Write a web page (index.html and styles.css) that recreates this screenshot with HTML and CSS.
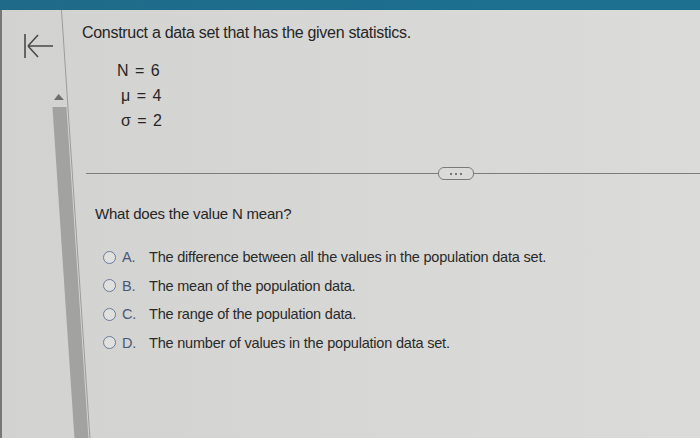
FILE: index.html
```html
<!DOCTYPE html>
<html>
<head>
<meta charset="utf-8">
<link rel="stylesheet" href="styles.css">
</head>
<body>
<div class="topbar"></div>
<div class="main">
  <aside class="side">
    <div class="iconcol">
      <svg class="back" width="30" height="26" viewBox="0 0 30 26">
        <path d="M2 1 V25 M5 13 H30 M5 13 L15 2 M5 13 L15 24" fill="none" stroke="#4a4a4a" stroke-width="1.6"/>
      </svg>
    </div>
    <div class="scrollcol">
      <div class="arrow"></div>
      <div class="thumb"></div>
    </div>
  </aside>
  <section class="content">
    <p class="title">Construct a data set that has the given statistics.</p>
    <div class="stats">
      <div class="stat n">N = 6</div>
      <div class="stat">μ = 4</div>
      <div class="stat">σ = 2</div>
    </div>
    <div class="sep">
      <div class="line left"></div>
      <div class="pill"><span></span><span></span><span></span></div>
      <div class="line"></div>
    </div>
    <p class="question">What does the value N mean?</p>
    <ul class="options">
      <li><span class="radio"></span><span class="letter">A.</span><span class="txt">The difference between all the values in the population data set.</span></li>
      <li><span class="radio"></span><span class="letter">B.</span><span class="txt">The mean of the population data.</span></li>
      <li><span class="radio"></span><span class="letter">C.</span><span class="txt">The range of the population data.</span></li>
      <li><span class="radio"></span><span class="letter">D.</span><span class="txt">The number of values in the population data set.</span></li>
    </ul>
  </section>
</div>
</body>
</html>
```
FILE: styles.css
```css
html, body {
  margin: 0;
  padding: 0;
}
body {
  width: 700px;
  height: 438px;
  overflow: hidden;
  background: linear-gradient(90deg, #d2d2d0 0%, #d7d7d5 50%, #dbdbd9 100%);
  font-family: "Liberation Sans", Arial, sans-serif;
  color: #262626;
}
.topbar {
  height: 10px;
  background: linear-gradient(90deg, #1f6a88, #1d6f8f 60%, #1e7090);
}
.main {
  display: flex;
  height: 428px;
}
.side {
  width: 61px;
  flex: none;
  display: flex;
  border-left: 2px solid #777;
  box-sizing: border-box;
}
.iconcol {
  width: 44px;
  padding-top: 23px;
  padding-left: 21px;
  box-sizing: border-box;
}
.back {
  display: block;
}
.scrollcol {
  flex: 1;
  display: flex;
  flex-direction: column;
  align-items: flex-end;
  border-right: 1px solid #9c9c9a;
  transform: skewX(3.8deg);
  transform-origin: top left;
  padding-top: 84px;
  padding-right: 1px;
}
.arrow {
  width: 0;
  height: 0;
  border-left: 5px solid transparent;
  border-right: 5px solid transparent;
  border-bottom: 6px solid #6e6e6e;
  margin: 0 2px 7px 0;
}
.thumb {
  width: 14px;
  flex: 1;
  background: #a2a2a0;
}
.content {
  flex: 1;
  padding-left: 21px;
}
.title {
  margin: 13px 0 0;
  font-size: 16px;
  line-height: 20px;
  letter-spacing: -0.3px;
}
.stats {
  margin: 15px 0 0 35px;
}
.stat {
  font-size: 16px;
  line-height: 25px;
  padding-left: 4px;
  word-spacing: 2px;
}
.stat.n {
  padding-left: 0;
}
.sep {
  display: flex;
  align-items: center;
  margin: 34px 0 0 4px;
}
.line {
  height: 1px;
  background: #7d7d7b;
  flex: 1;
}
.line.left {
  flex: none;
  width: 352px;
}
.pill {
  width: 34px;
  height: 11px;
  border: 1px solid #7a7a78;
  border-radius: 6px;
  display: flex;
  justify-content: center;
  align-items: center;
  gap: 3px;
  background: #dadad8;
}
.pill span {
  width: 2px;
  height: 2px;
  background: #555;
  border-radius: 1px;
}
.question {
  margin: 24px 0 0 13px;
  font-size: 15px;
  line-height: 20px;
  letter-spacing: -0.2px;
}
.options {
  list-style: none;
  margin: 19px 0 0 21px;
  padding: 0;
}
.options li {
  display: flex;
  align-items: center;
  height: 28.5px;
  font-size: 14.5px;
  letter-spacing: -0.2px;
}
.radio {
  width: 11px;
  height: 11px;
  border: 1.5px solid #6c7a98;
  border-radius: 50%;
  margin-right: 6px;
  background: #e0e0de;
}
.letter {
  color: #4a5878;
  width: 27px;
}
.txt {
  color: #2a2a2a;
}
```
